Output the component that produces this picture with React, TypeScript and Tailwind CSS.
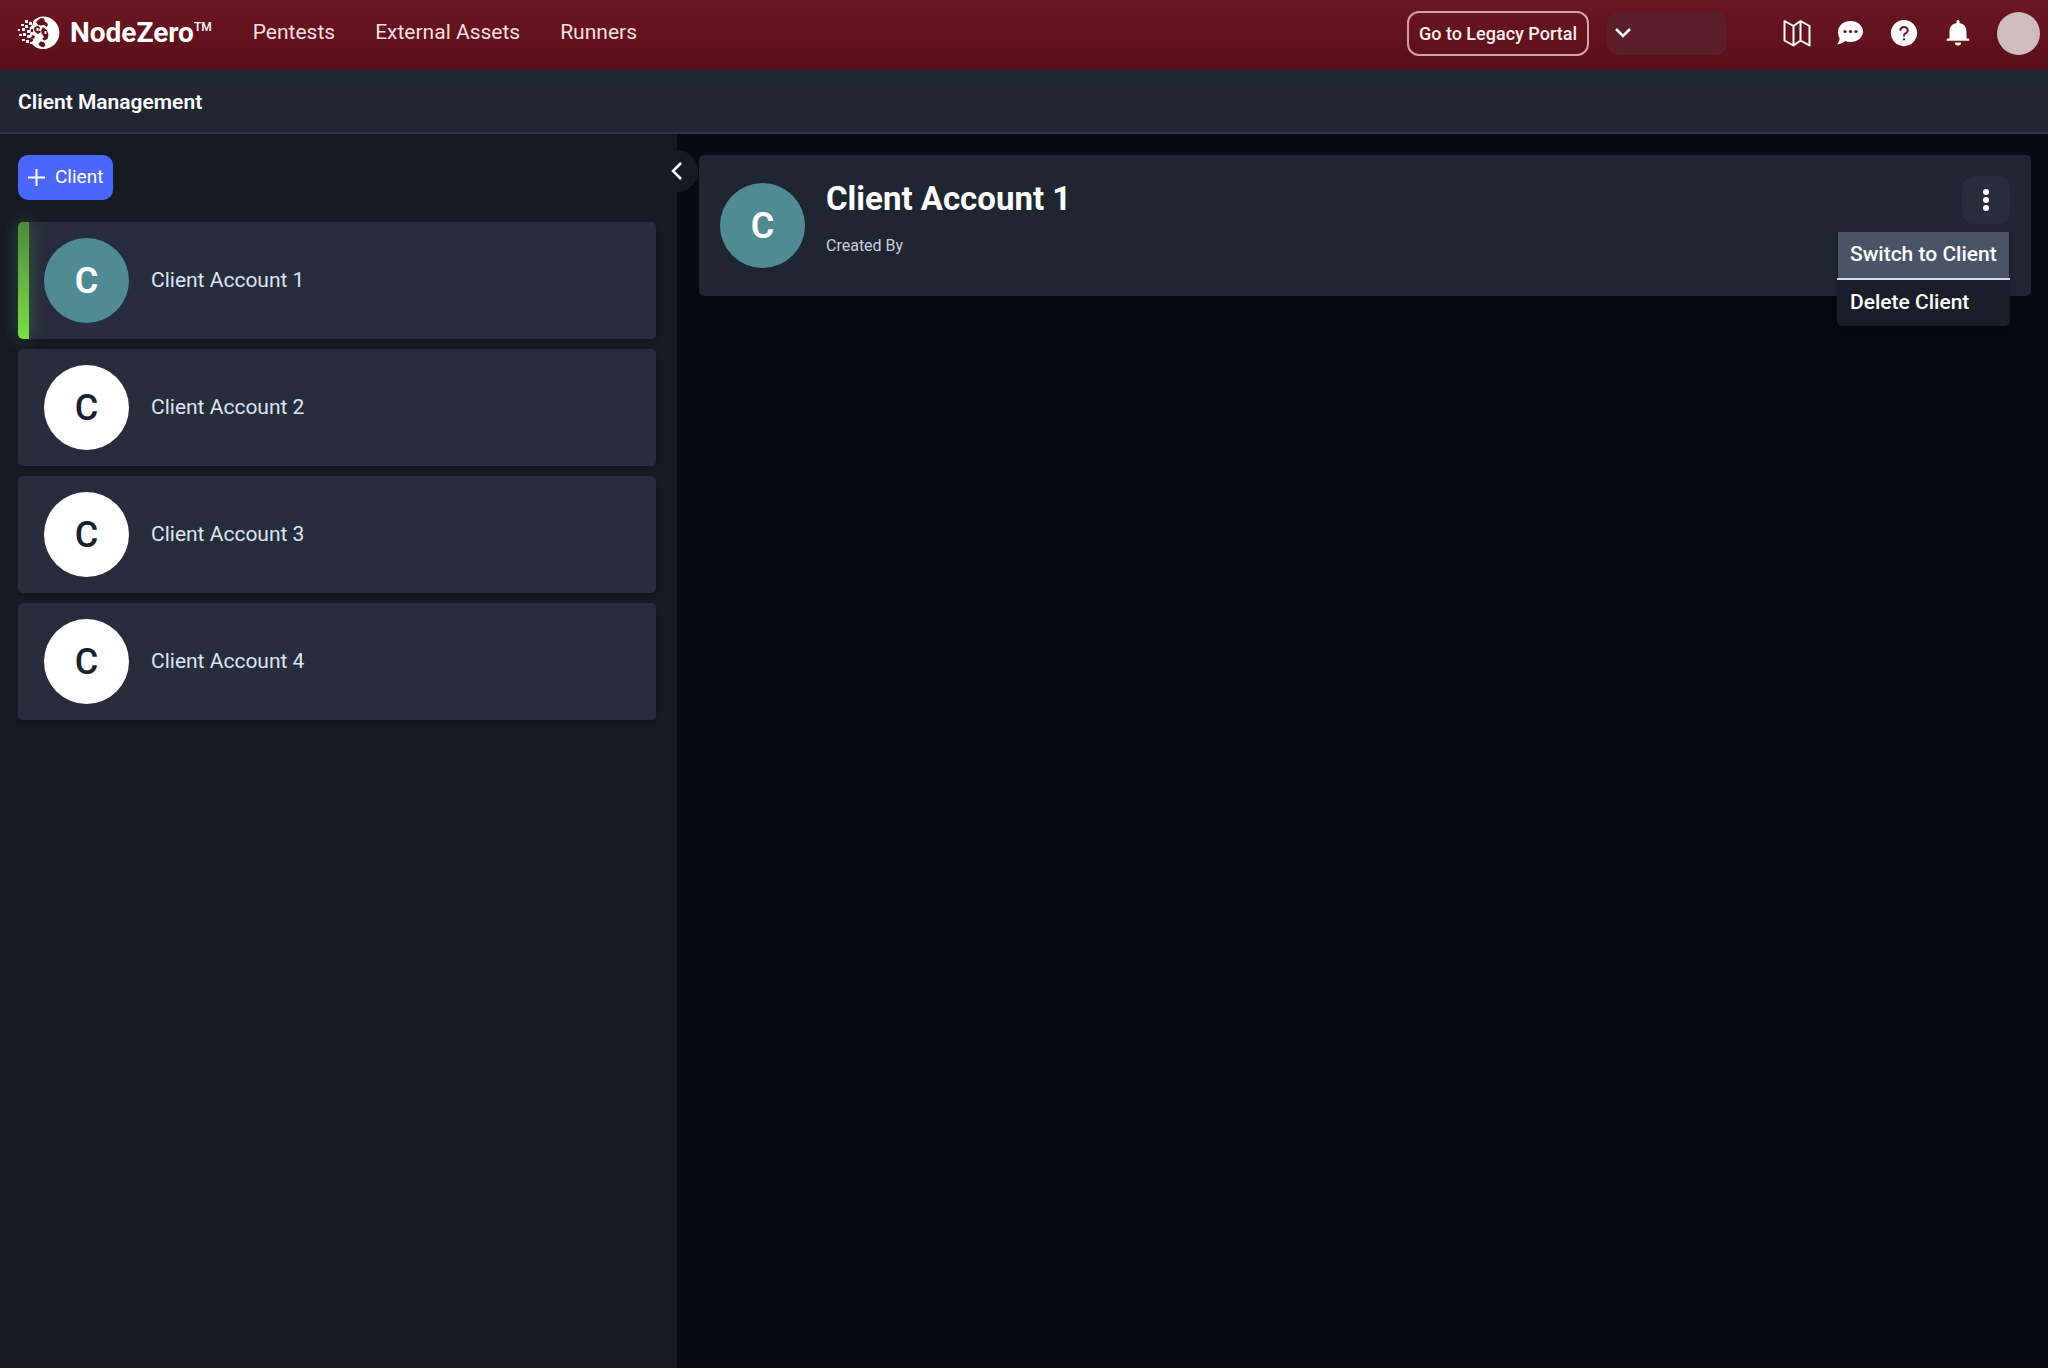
import { useState } from "react";
import { AiFillQuestionCircle } from "react-icons/ai";

const clients = [
  { id: 1, name: "Client Account 1" },
  { id: 2, name: "Client Account 2" },
  { id: 3, name: "Client Account 3" },
  { id: 4, name: "Client Account 4" },
];

const Logo = () => (
  <svg width="42" height="34" viewBox="0 0 42 34" fill="#fff" aria-hidden="true">
    <path d="M25 0.500a16.300 16.300 0 1 1-3 32.300c-4-.8-7-3-8.500-6l2-3-4-3 1-5-1-4 3-3 1-4c2.500-2.500 6-4.300 9.500-4.300z" />
    {/* face */}
    <g fill="#64131d">
      <path d="M20 4l3-2 3 .5 1 3 3 2.500-1 3-3-2-3 .5-3-.5-2-3z" />
      <path d="M17 11l3-1.500 2 2-1 2.500 2 2-3 2-3-2-1.500-3z" />
      <path d="M25 11l4 3 1.500 5-1 4-3 1.500-2.500-1.500 2-2-2-3-1-3z" />
      <path d="M22 25.500l4 .5 1.500 3-2 2.500-3-1-2-2z" />
      <path d="M13 13h2v3h-2zM14 19l3 1-1 3-3-1z" />
    </g>
    <path d="M18.500 12h2v3h-2zM26.500 15h2v3h-2z" />
    {/* scattered pixels */}
    <g>
      <rect x="7" y="4" width="3" height="3" />
      <rect x="11" y="6" width="3" height="3" />
      <rect x="3" y="8" width="3" height="2" />
      <rect x="7" y="9" width="3" height="3" />
      <rect x="0" y="13" width="2" height="2" />
      <rect x="4" y="12" width="3" height="3" />
      <rect x="9" y="14" width="3" height="3" />
      <rect x="1" y="18" width="3" height="2" />
      <rect x="5" y="17" width="3" height="3" />
      <rect x="9" y="19" width="3" height="3" />
      <rect x="4" y="23" width="3" height="2" />
      <rect x="8" y="24" width="3" height="3" />
      <rect x="12" y="26" width="2" height="2" />
    </g>
  </svg>
);

const MapIcon = () => (
  <svg
    width="28"
    height="28"
    viewBox="0 0 28 28"
    fill="none"
    stroke="currentColor"
    strokeWidth="2"
    strokeLinejoin="round"
  >
    <path d="M1.500 2v19.500l9 5 7-5 9 5V7l-9-5-7 5zM10.500 7v19M17.500 2.500v19" />
  </svg>
);

const ChatIcon = () => (
  <svg width="28" height="26" viewBox="0 0 28 26">
    <path
      d="M14.500 1C21.500 1 27 5.700 27 11.500S21.500 22 14.500 22c-2 0-3.800-.3-5.400-1-2 1.800-4.600 3.200-8.100 3.600 1.400-1.700 2.400-3.500 2.600-6C2.500 16.600 2 14.200 2 11.500 2 5.700 7.500 1 14.500 1z"
      fill="currentColor"
    />
    <g fill="#64131d">
      <circle cx="9" cy="11.500" r="1.600" />
      <circle cx="14.500" cy="11.500" r="1.600" />
      <circle cx="20" cy="11.500" r="1.600" />
    </g>
  </svg>
);

const BellIcon = () => (
  <svg width="28" height="26" viewBox="-2 0 28 26" fill="currentColor">
    <path d="M12 0c.9 0 1.500.7 1.500 1.500v1.400C17.800 3.600 20.500 7 20.500 11v7.500h1.800c.6 0 1 .4 1 .9v1.400H.700v-1.400c0-.5.4-.9 1-.9h1.800V11c0-4 2.700-7.400 7-8.100V1.500C10.500.7 11.100 0 12 0z" />
    <path d="M8.800 22.500h6.400a3.200 3 0 0 1-6.400 0z" />
  </svg>
);

const Chevron = ({ d, w, h }: { d: string; w: number; h: number }) => (
  <svg
    width={w}
    height={h}
    viewBox={`0 0 ${w} ${h}`}
    fill="none"
    stroke="#fff"
    strokeWidth="2.500"
  >
    <path d={d} />
  </svg>
);

const Avatar = ({ active }: { active: boolean }) => (
  <span
    className={
      active
        ? "flex size-[85px] shrink-0 items-center justify-center rounded-full bg-[#508b93] text-[36px] font-semibold text-white"
        : "flex size-[85px] shrink-0 items-center justify-center rounded-full bg-white text-[36px] font-medium text-[#1a202c]"
    }
  >
    C
  </span>
);

const Header = () => (
  <header className="flex h-[70px] items-center bg-linear-to-b from-[#6b1623] to-[#5a0f18] pr-2 pb-1 pl-[18px] text-[#fbdfe0]">
    <a href="#home" className="flex items-center gap-[10px] text-white">
      <Logo />
      <span className="flex text-[28px] leading-8 font-bold">
        NodeZero<span className="text-[12px] leading-5 font-medium">TM</span>
      </span>
    </a>
    <nav className="ml-[41px] flex gap-10 text-[21px]">
      <a href="#pentests">Pentests</a>
      <a href="#assets">External Assets</a>
      <a href="#runners">Runners</a>
    </nav>
    <div className="ml-auto flex items-center">
      <button className="h-[45px] rounded-xl border-2 border-[#d3a0a5] px-[10px] text-[18px] font-medium text-[#fff0f0]">
        Go to Legacy Portal
      </button>
      <button
        aria-label="Select account"
        className="ml-[18px] flex h-11 w-[120px] items-center rounded-xl bg-[#5c1e2b] pl-2"
      >
        <Chevron d="M1 2l7 7 7-7" w={16} h={12} />
      </button>
      <div className="ml-14 flex items-center gap-[25px] text-white">
        <button aria-label="Guide">
          <MapIcon />
        </button>
        <button aria-label="Messages">
          <ChatIcon />
        </button>
        <button aria-label="Help">
          <AiFillQuestionCircle size={30} />
        </button>
        <button aria-label="Notifications">
          <BellIcon />
        </button>
        <button aria-label="Profile" className="size-[43px] rounded-full bg-[#cfbcc0]" />
      </div>
    </div>
  </header>
);

export default function App() {
  const [selected, setSelected] = useState(1);
  const current = clients.find((c) => c.id === selected) ?? clients[0];

  return (
    <div className="flex min-h-screen flex-col bg-[#070a12] font-['Roboto',sans-serif] text-white">
      <Header />
      <div className="flex h-16 items-center border-b-2 border-[#2d3442] bg-linear-to-b from-[#1c2837] to-[#212633] to-25% px-[18px] pt-1">
        <h1 className="text-[21px] font-semibold">Client Management</h1>
      </div>
      <div className="flex grow">
        <aside className="w-[677px] shrink-0 bg-[#161a23] pt-[21px] pr-[21px] pl-[18px]">
          <button className="flex h-[45px] items-center gap-[10px] rounded-[10px] bg-[#4b66fa] px-[10px] text-[19px]">
            <svg width="17" height="17" viewBox="0 0 17 17" stroke="#fff" strokeWidth="2">
              <path d="M8.500 0v17M0 8.500h17" />
            </svg>
            Client
          </button>
          <ul className="mt-[22px] flex flex-col gap-[10px]">
            {clients.map((c) => (
              <li key={c.id}>
                <button
                  onClick={() => setSelected(c.id)}
                  className="flex h-[117px] w-full items-stretch rounded-[5px] bg-[#272d3d] text-left text-[21px] text-[#dfe4f2] shadow-md"
                >
                  {c.id === selected ? (
                    <span className="w-[11px] rounded-l-[5px] bg-linear-to-b from-[#4c8c3c] to-[#7cdf48] shadow-[0_0_16px_#4c8c3c88]" />
                  ) : (
                    <span className="w-[11px]" />
                  )}
                  <span className="ml-[15px] flex items-center gap-[22px]">
                    <Avatar active={c.id === selected} />
                    {c.name}
                  </span>
                </button>
              </li>
            ))}
          </ul>
        </aside>

        <main className="relative grow pt-[21px] pr-[17px] pl-[22px]">
          <button
            aria-label="Collapse list"
            className="absolute top-4 -left-[21px] flex size-[42px] items-center justify-center rounded-full bg-[#161a23]"
          >
            <Chevron d="M11 1L3 9l8 8" w={14} h={18} />
          </button>
          <section className="relative flex h-[141px] items-start rounded-[5px] bg-[#202532] px-[21px]">
            <span className="mt-7">
              <Avatar active />
            </span>
            <div className="mt-[23px] ml-[21px]">
              <h2 className="text-[33px] leading-[42px] font-bold">{current.name}</h2>
              <p className="mt-[14px] text-[16px] leading-6 text-[#c9cfdd]">Created By</p>
            </div>
            <button
              aria-label="Client actions"
              className="mt-[21px] ml-auto flex h-12 w-12 items-center justify-center rounded-xl bg-[#272d3d]"
            >
              <svg width="6" height="22" viewBox="0 0 6 22" fill="#fff">
                <circle cx="3" cy="3" r="3" />
                <circle cx="3" cy="11" r="3" />
                <circle cx="3" cy="19" r="3" />
              </svg>
            </button>
            <div className="absolute top-[77px] right-[21px] flex w-[173px] flex-col rounded-b-[5px] bg-[#1a1e29] text-[21px] font-medium shadow-lg">
              <button className="mx-px h-[46px] bg-[#4a5469] px-3 text-left">
                Switch to Client
              </button>
              <button className="h-12 border-t-2 border-[#d5d9e2] px-[13px] text-left">
                Delete Client
              </button>
            </div>
          </section>
        </main>
      </div>
    </div>
  );
}
